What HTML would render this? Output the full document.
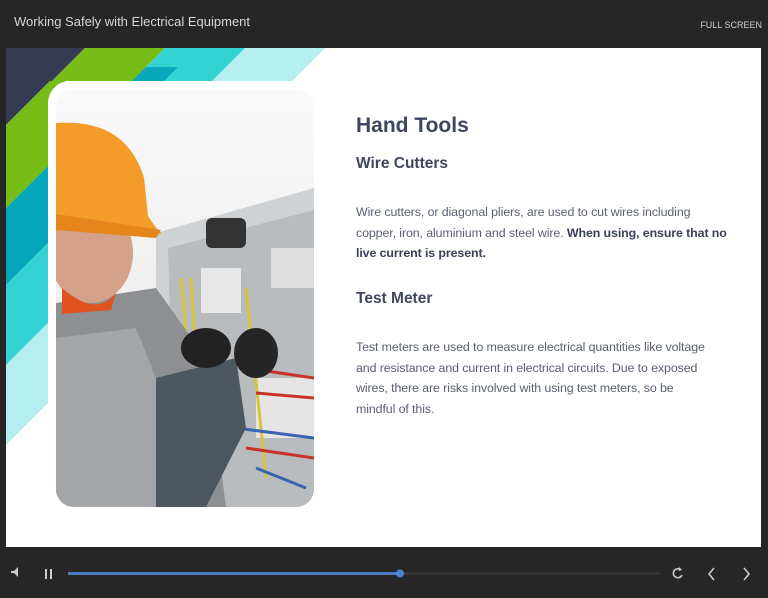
<!DOCTYPE html>
<html><head><meta charset="utf-8"><style>
*{margin:0;padding:0;box-sizing:border-box}
body{width:768px;height:598px;background:#262626;font-family:"Liberation Sans",sans-serif;position:relative;overflow:hidden}
.hdr{position:absolute;left:14px;top:14px;color:#d6d6d6;font-size:13px}
.fs{position:absolute;right:6px;top:20px;color:#cfcfcf;font-size:9px}
.slide{position:absolute;left:6px;top:48px;width:755px;height:499px;background:#fff;overflow:hidden}
.txt{position:absolute;left:356px;color:#3d4560;white-space:nowrap}
.h1{top:114px;font-size:21px;font-weight:bold}
.h2{font-size:15.5px;font-weight:bold;color:#3f465e}
.p{font-size:12.4px;line-height:20.6px;color:#5a5f72;letter-spacing:-0.1px}
.p b{color:#3a4058}
</style></head><body>
<div class="hdr">Working Safely with Electrical Equipment</div>
<div class="fs">FULL SCREEN</div>
<div class="slide">
<svg width="755" height="499" style="position:absolute;left:0;top:0">
<defs>
<clipPath id="lc"><rect x="0" y="33" width="60" height="466"/></clipPath>
<clipPath id="c"><rect x="50" y="41" width="258" height="418" rx="18"/></clipPath>
<linearGradient id="bg" x1="0" y1="0" x2="0" y2="1"><stop offset="0" stop-color="#fafafa"/><stop offset="1" stop-color="#e4e4e4"/></linearGradient>
</defs>
<g clip-path="url(#lc)">
<polygon points="-10,0 77,0 -423,500 -510,500" fill="#363b52"/>
<polygon points="77,0 160,0 -340,500 -423,500" fill="#76bd18"/>
<polygon points="160,0 237,0 -263,500 -340,500" fill="#06a7bb"/>
<polygon points="237,0 317,0 -183,500 -263,500" fill="#34d2d3"/>
<polygon points="317,0 397,0 -103,500 -183,500" fill="#b4eeee"/>
</g>
<polygon points="0,0 79,0 46,33 0,33" fill="#363b52"/>
<polygon points="79,0 159,0 126,33 46,33" fill="#76bd18"/>
<polygon points="159,0 239,0 206,33 126,33" fill="#34d2d3"/>
<polygon points="126,33 140,19 172,19 158,33" fill="#0aa8bb"/>
<polygon points="239,0 319,0 286,33 206,33" fill="#b4eeee"/>
<rect x="42" y="33" width="274" height="434" rx="22" fill="#fff"/>
<g clip-path="url(#c)">
<rect x="50" y="41" width="258" height="418" fill="url(#bg)"/>
<polygon points="150,185 308,140 308,459 150,459" fill="#cfd2d4"/>
<polygon points="162,200 308,162 308,459 170,459" fill="#b8bcbf"/>
<rect x="195" y="220" width="40" height="45" fill="#e8e8e8"/>
<rect x="265" y="200" width="43" height="40" fill="#ddd"/>
<rect x="250" y="330" width="58" height="60" fill="#e5e5e5"/>
<path d="M175 230 Q185 320 180 400 M185 230 Q190 320 200 420 M240 240 Q250 330 260 430" stroke="#d8c43a" stroke-width="3" fill="none"/>
<path d="M240 320 L308 330 M250 345 L308 350 M240 400 L308 410" stroke="#c7332a" stroke-width="3"/>
<path d="M230 380 L308 390 M250 420 L300 440" stroke="#3a63b0" stroke-width="3"/>
<rect x="200" y="170" width="40" height="30" rx="6" fill="#333"/>
<path d="M50 255 L150 240 L200 310 L220 459 L50 459 Z" fill="#8d8f93"/>
<path d="M50 290 L130 280 L170 380 L160 459 L50 459 Z" fill="#a3a5a9"/>
<path d="M150 330 L230 310 L240 380 L200 459 L150 459 Z" fill="#4b5860"/>
<ellipse cx="85" cy="205" rx="42" ry="50" fill="#d4a189"/>
<path d="M56 240 Q90 270 110 245 L105 262 L56 266 Z" fill="#e0521e"/>
<path d="M50 75 Q120 70 138 130 L142 168 Q148 178 156 186 L50 176 Z" fill="#f39c2a"/>
<path d="M50 166 L155 182 L150 190 L50 182 Z" fill="#e5861c"/>
<ellipse cx="200" cy="300" rx="25" ry="20" fill="#222"/>
<ellipse cx="250" cy="305" rx="22" ry="25" fill="#252525"/>
</g>
</svg>
</div>
<div class="txt h1">Hand Tools</div>
<div class="txt h2" style="top:155px">Wire Cutters</div>
<div class="txt p" style="top:202px">Wire cutters, or diagonal pliers, are used to cut wires including<br>copper, iron, aluminium and steel wire. <b>When using, ensure that no<br>live current is present.</b></div>
<div class="txt h2" style="top:290px">Test Meter</div>
<div class="txt p" style="top:337px">Test meters are used to measure electrical quantities like voltage<br>and resistance and current in electrical circuits. Due to exposed<br>wires, there are risks involved with using test meters, so be<br>mindful of this.</div>
<svg width="768" height="50" style="position:absolute;left:0;top:548px">
<path d="M11 23 h3 l4 -4 v10 l-4 -4 h-3z" fill="#ccc"/>
<rect x="45" y="21" width="2" height="10" fill="#ccc"/><rect x="50" y="21" width="2" height="10" fill="#ccc"/>
<rect x="68" y="24.5" width="592" height="2" fill="#3a3a3a"/>
<rect x="68" y="24" width="332" height="3" fill="#4a7cc0"/>
<circle cx="400" cy="25.5" r="4" fill="#4a86d0"/>
<path d="M681 22 A4.5 4.5 0 1 0 682 27" stroke="#ccc" stroke-width="1.6" fill="none"/><path d="M679 19 l3 3 l-3.5 1z" fill="#ccc"/>
<path d="M714 20 l-5 6 l5 6" stroke="#ccc" stroke-width="1.6" fill="none"/>
<path d="M744 20 l5 6 l-5 6" stroke="#ccc" stroke-width="1.6" fill="none"/>
</svg>
</body></html>
